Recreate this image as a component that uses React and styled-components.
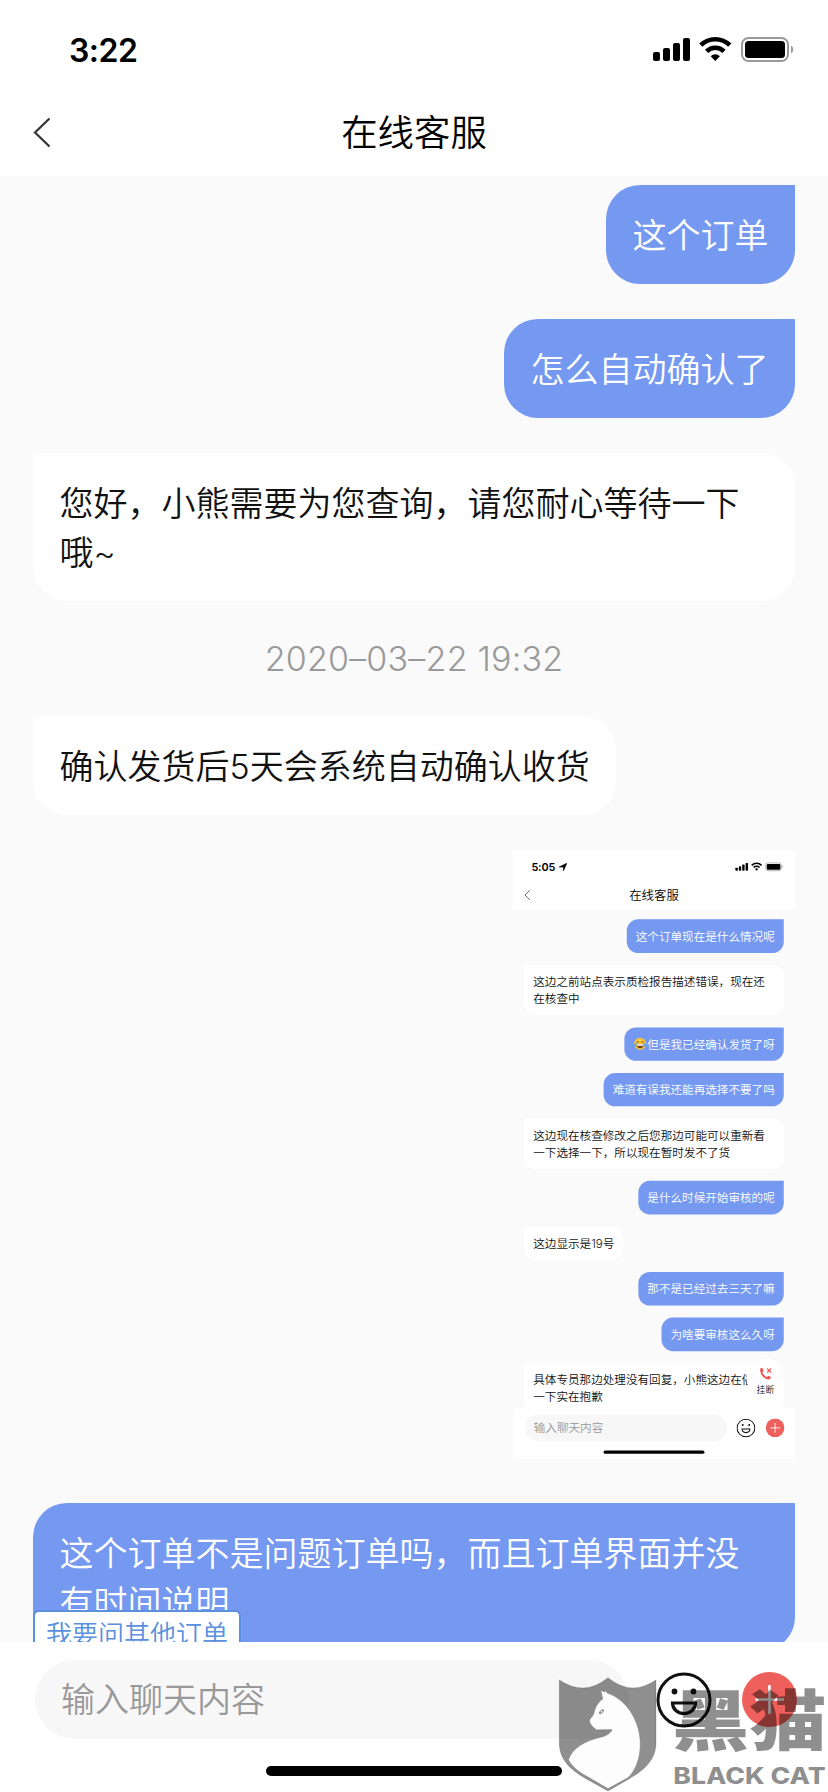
import React from "react";
import styled, { createGlobalStyle } from "styled-components";

const GlobalStyle = createGlobalStyle`
  * {
    box-sizing: border-box;
  }

  body {
    margin: 0;
    background: #fff;
  }
`;

const Screen = styled.div`
  position: relative;
  display: flex;
  flex-direction: column;
  width: 828px;
  height: 1792px;
  overflow: hidden;
  background-color: #fafafa;
  color: #000;
  font-family: Inter, "Noto Sans CJK SC", sans-serif;
`;

const Top = styled.div`
  height: 176px;
  flex: none;
  background-color: #fff;
`;

const StatusBar = styled.div`
  display: flex;
  align-items: center;
  justify-content: space-between;
  height: 88px;
  padding: 12px 33px 0 ${(props) => (props.$located ? "54px" : "69px")};
`;

const Clock = styled.div`
  display: flex;
  align-items: center;
  gap: 11px;
  font-size: 32px;
  font-weight: 600;
  letter-spacing: -0.5px;
`;

const TitleBar = styled.div`
  display: grid;
  grid-template-columns: 84px 1fr 84px;
  align-items: center;
  height: 88px;
`;

const Back = styled.svg`
  margin-left: 32px;
`;

const Title = styled.div`
  padding-top: 1px;
  text-align: center;
  font-size: 36.4px;
  font-weight: 350;
  line-height: 60px;
`;

const Chat = styled.div`
  position: relative;
  flex: 1;
  min-height: 0;
  display: flex;
  flex-direction: column;
  gap: 35.5px;
  padding: ${(props) => props.$top} 33px 0;
  overflow: hidden;
`;

const Bubble = styled.div`
  flex: none;
  align-self: ${(props) => (props.$mine ? "flex-end" : "flex-start")};
  max-width: 762px;
  padding: 25.5px 26.5px 23.5px;
  border-radius: ${(props) =>
    props.$mine ? "34px 0 34px 34px" : "0 34px 34px 34px"};
  background-color: ${(props) => (props.$mine ? "#7599f0" : "#fff")};
  color: ${(props) => (props.$mine ? "#fff" : "#111")};
  font-size: 34px;
  font-weight: 350;
  line-height: 49.5px;
`;

const Stamp = styled.div`
  flex: none;
  height: 44px;
  line-height: 44px;
  text-align: center;
  color: #999;
  font-size: 34px;
  font-weight: 350;
  letter-spacing: 0.2px;
`;

const Photo = styled.div`
  flex: none;
  align-self: flex-end;
  width: 282px;
  height: 609px;
  margin-bottom: 8.5px;
  overflow: hidden;
`;

const Shrink = styled.div`
  width: 828px;
  transform: scale(0.3406, 0.34);
  transform-origin: 0 0;
`;

const QuickReply = styled.button`
  position: absolute;
  left: 33px;
  top: 1434px;
  height: 50px;
  padding: 0 11px;
  border: 2px solid #5a90dd;
  border-radius: 6px;
  background-color: #fff;
  color: #5a90dd;
  font-family: inherit;
  font-size: 26px;
  font-weight: 350;
  line-height: 46px;
  white-space: nowrap;
`;

const Footer = styled.div`
  display: flex;
  flex-direction: column;
  align-items: center;
  flex: none;
  height: 150px;
  padding-top: 18px;
  background-color: #fff;
`;

const InputRow = styled.div`
  display: flex;
  align-items: center;
  width: 100%;
  padding: 0 31px 0 35px;
`;

const Field = styled.div`
  width: 594px;
  height: 79px;
  padding-left: 26px;
  border-radius: 40px;
  background-color: #f7f7f7;
  color: #999;
  font-size: 34px;
  font-weight: 350;
  line-height: 80px;
`;

const Smile = styled.svg`
  margin-left: 27px;
`;

const Plus = styled.svg`
  margin-left: auto;
`;

const HomeBar = styled.div`
  width: 296px;
  height: 10px;
  margin-top: 27px;
  border-radius: 5px;
  background-color: #000;
`;

const HangUp = styled.div`
  position: absolute;
  left: 685px;
  top: 1496px;
  display: flex;
  flex-direction: column;
  align-items: center;
  gap: 7px;
  width: 112px;
  height: 112px;
  padding-top: 24px;
  border-radius: 56px;
  background-color: #fff;
  color: #222;
  font-size: 26px;
  font-weight: 350;
  line-height: 36px;
`;

const Joy = styled.svg`
  margin: 0 3px -5px 0;
`;

const Watermark = styled.svg`
  position: absolute;
  left: 550px;
  top: 1665px;
`;

const StatusIcons = () => (
  <svg width="144" height="30" viewBox="0 0 144 30">
    <rect x="2" y="17" width="7" height="9" rx="2" />
    <rect x="12" y="13" width="7" height="13" rx="2" />
    <rect x="22" y="8" width="7" height="18" rx="2" />
    <rect x="32" y="3" width="7" height="23" rx="2" />
    <g fill="none" stroke="#000" strokeWidth="4.6">
      <path d="M49.8 10.2a20.5 20.5 0 0 1 29 0" />
      <path d="M55.6 16.4a12.3 12.3 0 0 1 17.4 0" />
    </g>
    <path d="M64.3 26l-4.6-4.8a6.7 6.7 0 0 1 9.2 0z" />
    <rect
      x="91"
      y="3"
      width="46"
      height="23"
      rx="6.5"
      fill="none"
      stroke="#9a9a9a"
      strokeWidth="2"
    />
    <rect x="94" y="6" width="40" height="17" rx="3.5" />
    <path d="M140 10.5a4.6 4.6 0 0 1 0 8z" fill="#9a9a9a" />
  </svg>
);

const Header = ({ time, located }) => (
  <Top>
    <StatusBar $located={located}>
      <Clock>
        {time}
        {located && (
          <svg width="24" height="24" viewBox="0 0 24 24">
            <path d="M23 1L13 23V12H1z" stroke="#000" strokeWidth="2" />
          </svg>
        )}
      </Clock>
      <StatusIcons />
    </StatusBar>
    <TitleBar>
      <Back width="20" height="32" viewBox="0 0 20 32">
        <path
          d="M17.5 2.5L3 16.5l14.5 14"
          fill="none"
          stroke="#333"
          strokeWidth="2.2"
        />
      </Back>
      <Title>在线客服</Title>
    </TitleBar>
  </Top>
);

const InputBar = () => (
  <Footer>
    <InputRow>
      <Field>输入聊天内容</Field>
      <Smile width="56" height="56" viewBox="0 0 56 56">
        <circle cx="28" cy="28" r="26" fill="none" stroke="#111" strokeWidth="3" />
        <circle cx="18.5" cy="19.5" r="2.9" fill="#111" />
        <circle cx="37.5" cy="19.5" r="2.9" fill="#111" />
        <path
          d="M16.5 31h23c0 6-5 10.5-11.5 10.5S16.5 37 16.5 31z"
          fill="none"
          stroke="#111"
          strokeWidth="3.2"
        />
      </Smile>
      <Plus width="55" height="55" viewBox="0 0 55 55">
        <circle cx="27.5" cy="27.5" r="27.5" fill="#ee605c" />
        <path d="M13.5 27.5h28.5M27.5 13v29" stroke="#fff" strokeWidth="2.6" />
      </Plus>
    </InputRow>
    <HomeBar />
  </Footer>
);

const JoyFace = () => (
  <Joy width="38" height="38" viewBox="0 0 38 38">
    <circle cx="19" cy="19" r="17.5" fill="#f8c53a" />
    <path d="M8 15q4-5 8 0M22 15q4-5 8 0" fill="none" stroke="#5f3a12" strokeWidth="2.4" />
    <path d="M8 20h22c0 8-5 12-11 12S8 28 8 20z" fill="#7a4316" />
    <path d="M9 20.5h20l-1 4.500H10z" fill="#fff" />
    <path d="M9 17c-6 1-9 5-8 9s8 3 8-9zM29 17c6 1 9 5 8 9s-8 3-8-9z" fill="#58aee6" />
  </Joy>
);

const oldMessages = [
  { mine: true, text: "这个订单现在是什么情况呢" },
  { text: "这边之前站点表示质检报告描述错误，现在还在核查中" },
  { mine: true, joy: true, text: "但是我已经确认发货了呀" },
  { mine: true, text: "难道有误我还能再选择不要了吗" },
  { text: "这边现在核查修改之后您那边可能可以重新看一下选择一下，所以现在暂时发不了货" },
  { mine: true, text: "是什么时候开始审核的呢" },
  { text: "这边显示是19号" },
  { mine: true, text: "那不是已经过去三天了嘛" },
  { mine: true, text: "为啥要审核这么久呀" },
  { text: "具体专员那边处理没有回复，小熊这边在催促一下实在抱歉" },
];

const OldChat = () => (
  <Photo>
    <Shrink>
      <Screen>
        <Header time="5:05" located />
        <Chat $top="28px">
          {oldMessages.map((item, i) => (
            <Bubble key={i} $mine={item.mine}>
              {item.joy && <JoyFace />}
              {item.text}
            </Bubble>
          ))}
        </Chat>
        <InputBar />
        <HangUp>
          <svg width="42" height="42" viewBox="0 0 42 42" fill="none" stroke="#ee5550">
            <path
              d="M6 5C3 20 17 38 33 37l5-6-8-5-5 4C18 26 14 21 12 16l4-4-4-9z"
              fill="#ee5550"
              stroke="none"
            />
            <path d="M26 5l12 12M38 5L26 17" strokeWidth="3.5" />
          </svg>
          挂断
        </HangUp>
      </Screen>
    </Shrink>
  </Photo>
);

const BlackCat = () => (
  <Watermark width="278" height="127" viewBox="0 0 834 381">
    <path
      d="M28 45Q104 96 174 38Q244 96 318 45V235C318 285 280 318 238 341L174 378L108 341C62 315 28 284 28 235z"
      fill="#000"
      fillOpacity="0.44"
      stroke="#000"
      strokeOpacity="0.16"
      strokeWidth="3"
    />
    <path
      d="M152 75L163 81L166 77L172 84C229 103 268 165 271 230C273 277 256 320 233 339L174 371L110 334C83 319 64 302 55 284C67 249 106 227 151 217C168 213 181 205 186 194C170 195 153 194 140 195C130 188 121 180 118 169C118 162 127 155 131 147C134 130 143 112 158 102z"
      fill="#fdfdfd"
      stroke="#858384"
      strokeWidth="2"
    />
    <path d="M146 145c2-7 8-12 15-12c2 8-3 15-12 14z" fill="#858384" />
    <circle cx="155" cy="140" r="3" fill="#fff" />
    <g fill="#000" fillOpacity="0.44">
      <text
        transform="translate(366 240) scale(1 0.87)"
        fontFamily="Noto Sans CJK SC"
        fontSize="228"
        fontWeight="900"
        textLength="464"
        lengthAdjust="spacingAndGlyphs"
      >
        黑猫
      </text>
      <text
        x="370"
        y="357"
        fontFamily="Inter"
        fontSize="67"
        fontWeight="800"
        textLength="457"
        lengthAdjust="spacingAndGlyphs"
      >
        BLACK CAT
      </text>
    </g>
  </Watermark>
);

const App = () => {
  return (
    <>
      <GlobalStyle />
      <Screen>
        <Header time="3:22" />
        <Chat $top="9px">
          <Bubble $mine>这个订单</Bubble>
          <Bubble $mine>怎么自动确认了</Bubble>
          <Bubble>您好，小熊需要为您查询，请您耐心等待一下哦~</Bubble>
          <Stamp>2020–03–22 19:32</Stamp>
          <Bubble>确认发货后5天会系统自动确认收货</Bubble>
          <OldChat />
          <Bubble $mine>这个订单不是问题订单吗，而且订单界面并没有时间说明</Bubble>
          <QuickReply>我要问其他订单</QuickReply>
        </Chat>
        <InputBar />
        <BlackCat />
      </Screen>
    </>
  );
};

export default App;
